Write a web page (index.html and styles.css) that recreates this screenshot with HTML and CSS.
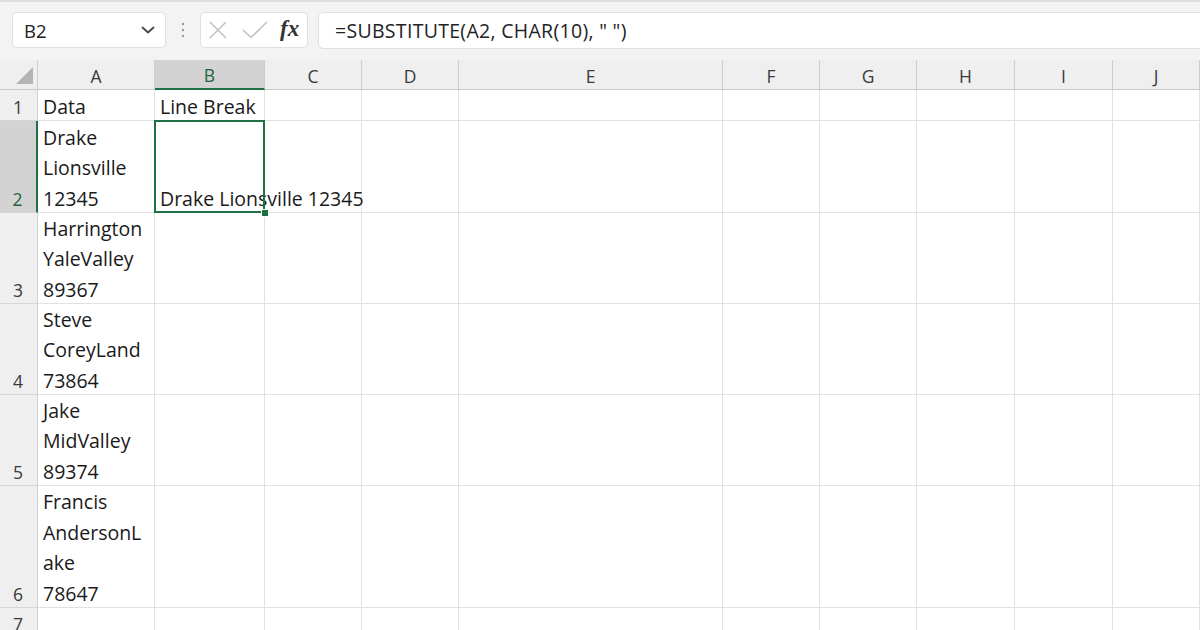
FILE: index.html
```html
<!DOCTYPE html>
<html>
<head>
<meta charset="utf-8">
<link rel="stylesheet" href="styles.css">
</head>
<body>
<div class="fbar">
  <div class="namebox">
    <span class="nb-text">B2</span>
    <svg class="chev" width="14" height="8" viewBox="0 0 14 8"><path d="M1.5 1.5 L7 6.5 L12.5 1.5" fill="none" stroke="#444" stroke-width="1.8" stroke-linecap="round" stroke-linejoin="round"/></svg>
  </div>
  <div class="dots">
    <svg width="4" height="16" viewBox="0 0 4 16"><circle cx="2" cy="2" r="1.2" fill="#9a9a9a"/><circle cx="2" cy="8" r="1.2" fill="#9a9a9a"/><circle cx="2" cy="14" r="1.2" fill="#9a9a9a"/></svg>
  </div>
  <div class="fxbox">
    <svg class="ic-x" width="20" height="20" viewBox="0 0 20 20"><path d="M2 2 L18 18 M18 2 L2 18" stroke="#c2c2c2" stroke-width="1.6" fill="none"/></svg>
    <svg class="ic-check" width="26" height="18" viewBox="0 0 26 18"><path d="M1 9 L9 16.5 L25 1" stroke="#c2c2c2" stroke-width="1.6" fill="none"/></svg>
    <span class="fx">fx</span>
  </div>
  <div class="formula">=SUBSTITUTE(A2, CHAR(10), " ")</div>
</div>

<div class="sheet">
  <div class="corner"><div class="tri"></div></div>
  <div class="ch">A</div>
  <div class="ch ch-sel">B</div>
  <div class="ch">C</div>
  <div class="ch">D</div>
  <div class="ch">E</div>
  <div class="ch">F</div>
  <div class="ch">G</div>
  <div class="ch">H</div>
  <div class="ch">I</div>
  <div class="ch">J</div>

  <div class="rh">1</div>
  <div class="c"><span class="v">Data</span></div>
  <div class="c"><span class="v">Line Break</span></div>
  <div class="c"></div><div class="c"></div><div class="c"></div><div class="c"></div><div class="c"></div><div class="c"></div><div class="c"></div><div class="c"></div>

  <div class="rh rh-sel">2</div>
  <div class="c"><span class="v">Drake<br>Lionsville<br>12345</span></div>
  <div class="c c-sel"><span class="v nowrap">Drake Lionsville 12345</span></div>
  <div class="c"></div><div class="c"></div><div class="c"></div><div class="c"></div><div class="c"></div><div class="c"></div><div class="c"></div><div class="c"></div>

  <div class="rh">3</div>
  <div class="c"><span class="v">Harrington<br>YaleValley<br>89367</span></div>
  <div class="c"></div><div class="c"></div><div class="c"></div><div class="c"></div><div class="c"></div><div class="c"></div><div class="c"></div><div class="c"></div><div class="c"></div>

  <div class="rh">4</div>
  <div class="c"><span class="v">Steve<br>CoreyLand<br>73864</span></div>
  <div class="c"></div><div class="c"></div><div class="c"></div><div class="c"></div><div class="c"></div><div class="c"></div><div class="c"></div><div class="c"></div><div class="c"></div>

  <div class="rh">5</div>
  <div class="c"><span class="v">Jake<br>MidValley<br>89374</span></div>
  <div class="c"></div><div class="c"></div><div class="c"></div><div class="c"></div><div class="c"></div><div class="c"></div><div class="c"></div><div class="c"></div><div class="c"></div>

  <div class="rh">6</div>
  <div class="c"><span class="v">Francis<br>AndersonL<br>ake<br>78647</span></div>
  <div class="c"></div><div class="c"></div><div class="c"></div><div class="c"></div><div class="c"></div><div class="c"></div><div class="c"></div><div class="c"></div><div class="c"></div>

  <div class="rh">7</div>
  <div class="c"></div><div class="c"></div><div class="c"></div><div class="c"></div><div class="c"></div><div class="c"></div><div class="c"></div><div class="c"></div><div class="c"></div><div class="c"></div>
</div>
</body>
</html>
```

FILE: styles.css
```css
html, body {
  margin: 0;
  padding: 0;
  width: 1200px;
  height: 630px;
  overflow: hidden;
  background: #ffffff;
  font-family: "Open Sans", "Noto Sans", sans-serif;
  color: #1e1e1e;
}

.fbar {
  height: 60px;
  box-sizing: border-box;
  background: #f3f3f3;
  border-top: 2px solid #dedede;
  padding-top: 10px;
  display: flex;
  align-items: flex-start;
  overflow: hidden;
}

.fbar > * {
  flex-shrink: 0;
}

.namebox {
  margin-left: 12px;
  width: 154px;
  height: 36px;
  box-sizing: border-box;
  background: #fff;
  border: 1px solid #e0e0e0;
  border-radius: 5px;
  display: flex;
  align-items: center;
  justify-content: space-between;
  padding: 0 10px 0 11px;
  font-size: 18.5px;
  color: #222;
}

.dots {
  width: 34px;
  height: 36px;
  display: flex;
  align-items: center;
  justify-content: center;
}

.fxbox {
  width: 108px;
  height: 36px;
  box-sizing: border-box;
  background: #fff;
  border: 1px solid #e0e0e0;
  border-radius: 5px;
  display: flex;
  align-items: center;
  padding-left: 7px;
}

.ic-x { margin-right: 14px; }
.ic-check { margin-right: 12px; }

.fx {
  font-family: "Liberation Serif", serif;
  font-style: italic;
  font-weight: bold;
  font-size: 23px;
  color: #333;
  line-height: 1;
  margin-top: -3px;
}

.formula {
  margin-left: 10px;
  width: 900px;
  height: 37px;
  box-sizing: border-box;
  background: #fff;
  border: 1px solid #e0e0e0;
  border-radius: 5px 0 0 5px;
  display: flex;
  align-items: center;
  padding-left: 16px;
  font-size: 19.5px;
  letter-spacing: 0.3px;
  color: #222;
  white-space: pre;
}

.sheet {
  display: grid;
  grid-template-columns: 38px 117px 110px 97px 97px 264px 97px 97px 98px 98px 1fr;
  grid-template-rows: 30px 31px 92px 91px 91px 91px 122px 30px;
  background: #fff;
}

.corner {
  background: #efefef;
  border-right: 1px solid #cfcfcf;
  border-bottom: 1px solid #c8c8c8;
  display: flex;
  align-items: flex-end;
  justify-content: flex-end;
  padding: 0 4px 5px 0;
}

.tri {
  width: 17px;
  height: 17px;
  background: #b5b5b5;
  clip-path: polygon(100% 0, 100% 100%, 0 100%);
}

.ch {
  background: #efefef;
  border-right: 1px solid #cdcdcd;
  border-bottom: 1px solid #c8c8c8;
  display: flex;
  align-items: center;
  justify-content: center;
  font-size: 17.5px;
  color: #3a3a3a;
  padding-top: 2px;
}

.ch-sel {
  background: #d3d3d3;
  border-bottom: 2px solid #1e7145;
  color: #1e6640;
}

.rh {
  background: #efefef;
  border-right: 1px solid #cfcfcf;
  border-bottom: 1px solid #d6d6d6;
  display: flex;
  align-items: flex-end;
  justify-content: center;
  font-size: 17.5px;
  line-height: 26px;
  color: #3a3a3a;
  padding-right: 1px;
}

.rh-sel {
  background: #d3d3d3;
  border-right: 2px solid #1e7145;
  color: #1e6640;
}

.c {
  border-right: 1px solid #e1e1e1;
  border-bottom: 1px solid #e1e1e1;
  display: flex;
  align-items: flex-end;
  padding-left: 5px;
  font-size: 19.5px;
  line-height: 30.5px;
  min-width: 0;
  overflow: visible;
  color: #1a1a1a;
}

.v {
  display: block;
  margin-bottom: -2px;
}

.nowrap {
  white-space: nowrap;
}

.c-sel {
  position: relative;
}

.c-sel::after {
  content: "";
  position: absolute;
  left: -1px;
  top: -1px;
  right: -1px;
  bottom: -1px;
  border: 2px solid #1e7145;
  pointer-events: none;
}

.c-sel::before {
  content: "";
  position: absolute;
  right: -5px;
  bottom: -5px;
  width: 6px;
  height: 6px;
  background: #1e7145;
  border: 1px solid #fff;
  z-index: 2;
}
```
